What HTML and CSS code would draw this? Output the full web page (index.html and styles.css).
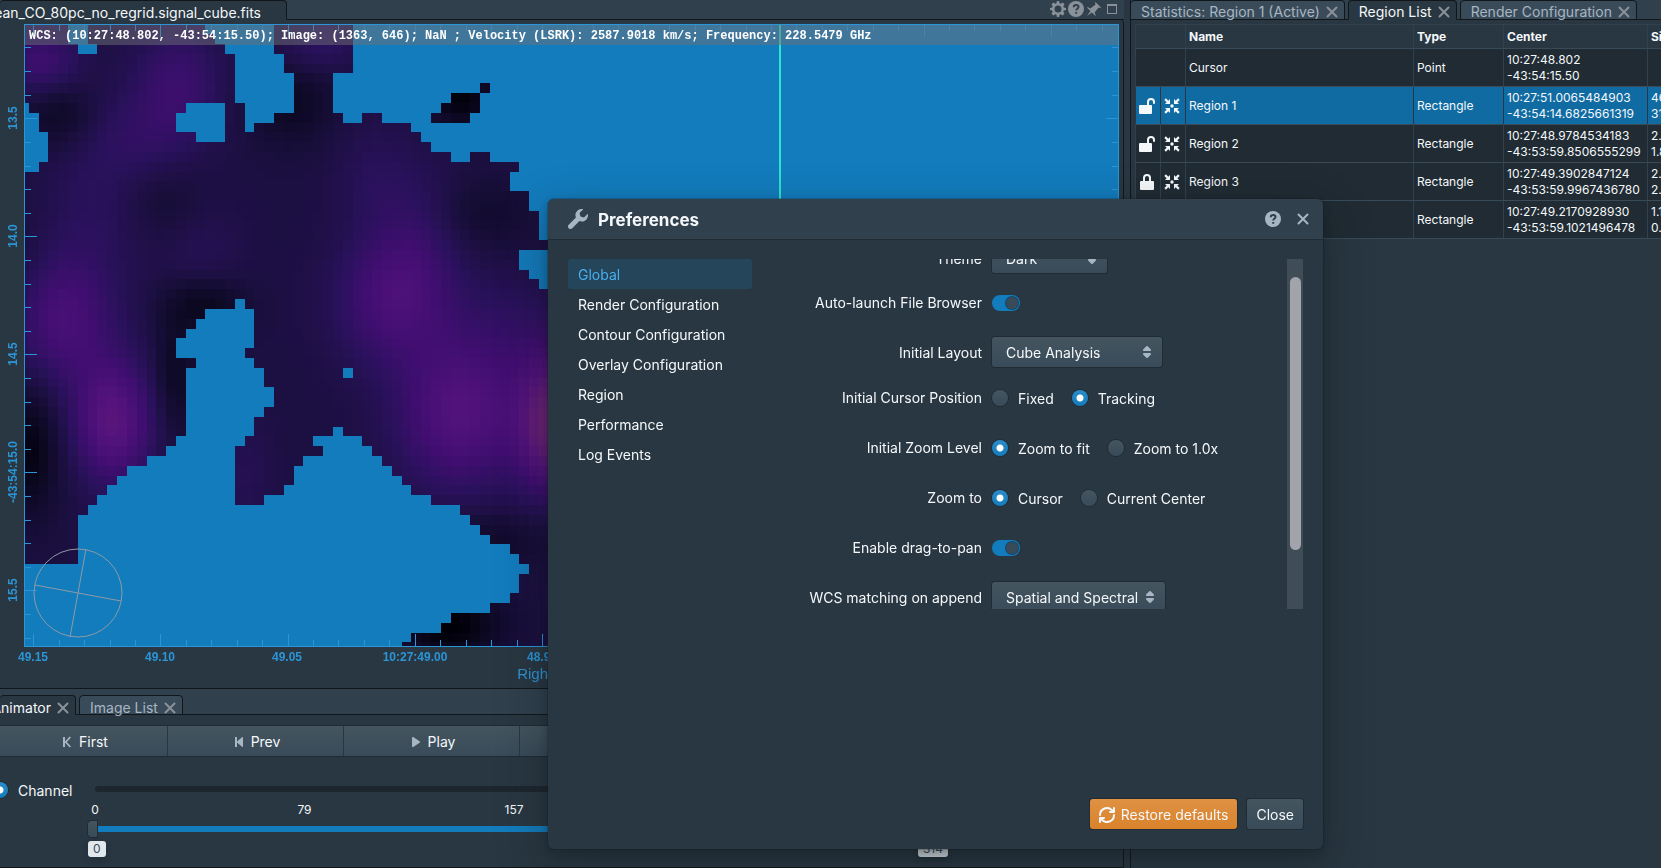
FILE: index.html
```html
<!DOCTYPE html>
<html lang="en">
<head>
<meta charset="utf-8">
<title>Image viewer</title>
<link rel="stylesheet" href="styles.css">
</head>
<body>
<svg class="sprite" aria-hidden="true">
  <symbol id="i-cross" viewBox="0 0 12 12"><path d="M1.500 1.500L10.500 10.500M10.500 1.500L1.500 10.500" fill="none" stroke="currentColor" stroke-width="2" stroke-linecap="round"/></symbol>
  <symbol id="i-cog" viewBox="0 0 16 16"><path fill-rule="evenodd" d="M6.900 0h2.200l.4 2.200 1.300.5L12.700 1.500l1.800 1.800-1.200 1.900.5 1.300 2.200.4v2.200l-2.200.4-.5 1.300 1.200 1.900-1.800 1.800-1.900-1.200-1.300.5L9.100 16H6.900l-.4-2.200-1.300-.5-1.900 1.200-1.800-1.800 1.200-1.900-.5-1.300L0 9.100V6.900l2.200-.4.5-1.300L1.500 3.300l1.800-1.800 1.900 1.200 1.300-.5zM8 4.500a3.500 3.500 0 100 7 3.500 3.500 0 000-7z"/></symbol>
  <symbol id="i-help" viewBox="0 0 16 16"><circle cx="8" cy="8" r="8"/><path class="cut" d="M5.700 6.300C5.700 4.700 6.700 4 8.100 4c1.400 0 2.400.8 2.400 2 0 1.700-2.300 1.800-2.300 3.400M8.200 11v1.800" fill="none" stroke-width="2"/></symbol>
  <symbol id="i-pin" viewBox="0 0 16 16"><path d="M9.410.920c-.51.51-.41 1.500.15 2.560L4.340 7.540C2.800 6.480 1.450 6.050.920 6.580l3.540 3.540-3.540 4.950 4.950-3.540 3.540 3.540c.53-.53.1-1.880-.96-3.420l4.060-5.220c1.060.56 2.040.66 2.550.15z"/></symbol>
  <symbol id="i-max" viewBox="0 0 16 16"><path fill-rule="evenodd" d="M3 3h10v10H3zM4 5v7h8V5z"/></symbol>
  <symbol id="i-wrench" viewBox="0 0 16 16"><path d="M15.830 3.700l-3.060 3.050-2.840-.7-.7-2.830L12.290.170a5 5 0 00-4.830 1.290 4.970 4.970 0 00-1.120 5.360L.580 12.580A2 2 0 002 16c.55 0 1.050-.22 1.410-.59l5.770-5.770c1.790.69 3.910.35 5.350-1.120 1.320-1.300 1.740-3.150 1.300-4.820z"/></symbol>
  <symbol id="i-unlock" viewBox="0 0 16 16"><path d="M12 0a4 4 0 00-4 4v3H1a1 1 0 00-1 1v7a1 1 0 001 1h11a1 1 0 001-1V8a1 1 0 00-1-1h-2V4a2 2 0 014 0v1a1 1 0 002 0V4a4 4 0 00-4-4z"/></symbol>
  <symbol id="i-lock" viewBox="0 0 16 16"><path fill-rule="evenodd" d="M14 7h-2V4a4 4 0 00-8 0v3H2a1 1 0 00-1 1v7a1 1 0 001 1h12a1 1 0 001-1V8a1 1 0 00-1-1zM6 7V4a2 2 0 014 0v3z"/></symbol>
  <symbol id="i-center" viewBox="0 0 16 16"><circle cx="8" cy="8" r="1.700"/><path d="M6 1v5H1l1.700-1.700L.300 1.900 1.900.300l2.400 2.400zM10 1v5h5l-1.700-1.700 2.400-2.400L14.100.300l-2.400 2.400zM6 15v-5H1l1.700 1.700-2.400 2.400 1.600 1.600 2.400-2.400zM10 15v-5h5l-1.700 1.700 2.400 2.400-1.600 1.600-2.400-2.400z"/></symbol>
  <symbol id="i-carets" viewBox="0 0 16 16"><path d="M5 7h6a1 1 0 00.71-1.710l-3-3a1 1 0 00-1.420 0l-3 3A1 1 0 005 7zm6 2H5a1 1 0 00-.71 1.710l3 3a1 1 0 001.420 0l3-3A1 1 0 0011 9z"/></symbol>
  <symbol id="i-refresh" viewBox="0 0 16 16"><path d="M15 7a1 1 0 00-1 1 6 6 0 01-10.460 4H5a1 1 0 000-2H1a1 1 0 00-1 1v4a1 1 0 002 0v-1.740A8 8 0 0016 8a1 1 0 00-1-1zm0-7a1 1 0 00-1 1v1.740A8 8 0 000 8a1 1 0 002 0 6 6 0 0110.460-4H11a1 1 0 000 2h4a1 1 0 001-1V1a1 1 0 00-1-1z"/></symbol>
  <symbol id="i-first" viewBox="0 0 16 16"><path d="M4 3h2v10H4zM12 3.600L7.800 8l4.200 4.400-1.300 1.200L5.500 8l5.200-5.600z"/></symbol>
  <symbol id="i-prev" viewBox="0 0 16 16"><path d="M4 3h2v4.500L11 3.200c.5-.4 1-.2 1 .5v8.600c0 .7-.5.9-1 .5L6 8.500V13H4z"/></symbol>
  <symbol id="i-play" viewBox="0 0 16 16"><path d="M4 3.800c0-.8.600-1 1.200-.7l6.400 4.200c.5.300.5 1 0 1.400l-6.400 4.200c-.6.300-1.200.1-1.200-.7z"/></symbol>
</svg>

<main class="workspace">
  <div class="left">
    <section class="stack viewer-stack">
      <header class="bar">
        <button class="tab active file-tab">clean_CO_80pc_no_regrid.signal_cube.fits</button>
        <div class="tools">
          <button aria-label="Settings"><svg><use href="#i-cog"/></svg></button>
          <button aria-label="Help"><svg><use href="#i-help"/></svg></button>
          <button aria-label="Pin"><svg><use href="#i-pin"/></svg></button>
          <button aria-label="Maximise"><svg><use href="#i-max"/></svg></button>
        </div>
      </header>
      <div class="viewer">
        <div class="plot">
          <canvas id="raster"></canvas>
          <div class="readout">WCS: (10:27:48.802, -43:54:15.50); Image: (1363, 646); NaN ; Velocity (LSRK): 2587.9018 km/s; Frequency: 228.5479 GHz</div>
        </div>
        <svg class="axes">
          <g class="beam">
            <circle cx="78" cy="573" r="44"/>
            <path d="M86 529L70 617M35 565L121 581"/>
          </g>
          <g class="ticklabels">
            <text x="33" y="641">49.15</text>
            <text x="160" y="641">49.10</text>
            <text x="287" y="641">49.05</text>
            <text x="415" y="641">10:27:49.00</text>
            <text x="542" y="641">48.95</text>
            <text transform="translate(17 98) rotate(-90)">13.5</text>
            <text transform="translate(17 216) rotate(-90)">14.0</text>
            <text transform="translate(17 334) rotate(-90)">14.5</text>
            <text transform="translate(17 452) rotate(-90)">-43:54:15.0</text>
            <text transform="translate(17 570) rotate(-90)">15.5</text>
          </g>
          <text class="title" x="571" y="659">Right Ascension</text>
          <text class="title" transform="translate(0 316) rotate(-90)">Declination</text>
        </svg>
      </div>
    </section>

    <section class="stack animator-stack">
      <header class="bar low">
        <button class="tab active anim-tab">Animator <svg><use href="#i-cross"/></svg></button>
        <button class="tab">Image List <svg><use href="#i-cross"/></svg></button>
      </header>
      <div class="animator">
        <div class="playback">
          <button><svg><use href="#i-first"/></svg>First</button>
          <button><svg><use href="#i-prev"/></svg>Prev</button>
          <button><svg><use href="#i-play"/></svg>Play</button>
          <button>Next</button>
          <button>Last</button>
        </div>
        <div class="channel">
          <label class="radio channel-radio"><input type="radio" name="axis" checked><span>Channel</span></label>
          <div class="sliders">
            <input class="track-slider" type="range" min="0" max="314" value="230" aria-label="Channel">
            <div class="scale"><span>0</span><span>79</span><span>157</span><span>236</span><span>314</span></div>
            <input class="range-slider" type="range" min="0" max="314" value="0" aria-label="Channel range">
            <div class="ends"><output>0</output><output>314</output></div>
          </div>
        </div>
      </div>
    </section>
  </div>

  <section class="stack right">
    <header class="bar">
      <button class="tab">Statistics: Region 1 (Active) <svg><use href="#i-cross"/></svg></button>
      <button class="tab active">Region List <svg><use href="#i-cross"/></svg></button>
      <button class="tab">Render Configuration <svg><use href="#i-cross"/></svg></button>
    </header>
    <div class="regions">
      <table>
        <colgroup><col class="c-icon"><col class="c-icon"><col class="c-name"><col class="c-type"><col class="c-center"><col class="c-size"></colgroup>
        <thead><tr><th colspan="2"></th><th>Name</th><th>Type</th><th>Center</th><th>Size</th></tr></thead>
        <tbody>
          <tr><td colspan="2"></td><td>Cursor</td><td>Point</td><td>10:27:48.802<br>-43:54:15.50</td><td></td></tr>
          <tr class="selected"><td><svg><use href="#i-unlock"/></svg></td><td><svg><use href="#i-center"/></svg></td><td>Region 1</td><td>Rectangle</td><td>10:27:51.0065484903<br>-43:54:14.6825661319</td><td>46<br>31</td></tr>
          <tr><td><svg><use href="#i-unlock"/></svg></td><td><svg><use href="#i-center"/></svg></td><td>Region 2</td><td>Rectangle</td><td>10:27:48.9784534183<br>-43:53:59.8506555299</td><td>2.<br>1.8</td></tr>
          <tr><td><svg><use href="#i-lock"/></svg></td><td><svg><use href="#i-center"/></svg></td><td>Region 3</td><td>Rectangle</td><td>10:27:49.3902847124<br>-43:53:59.9967436780</td><td>2.<br>2.</td></tr>
          <tr><td><svg><use href="#i-lock"/></svg></td><td><svg><use href="#i-center"/></svg></td><td>Region 4</td><td>Rectangle</td><td>10:27:49.2170928930<br>-43:53:59.1021496478</td><td>1.1<br>0.</td></tr>
        </tbody>
      </table>
    </div>
  </section>
</main>

<div class="dialog" role="dialog" aria-labelledby="dlg-title">
  <header class="dialog-head">
    <svg class="wrench"><use href="#i-wrench"/></svg>
    <h1 id="dlg-title">Preferences</h1>
    <button class="help" aria-label="Help"><svg><use href="#i-help"/></svg></button>
    <button class="close-x" aria-label="Close"><svg><use href="#i-cross"/></svg></button>
  </header>
  <div class="dialog-body">
    <nav>
      <a href="#global" class="current">Global</a>
      <a href="#render">Render Configuration</a>
      <a href="#contour">Contour Configuration</a>
      <a href="#overlay">Overlay Configuration</a>
      <a href="#region">Region</a>
      <a href="#performance">Performance</a>
      <a href="#log">Log Events</a>
    </nav>
    <div class="panel">
      <form class="fields">
        <div class="row tall">
          <label for="theme">Theme</label>
          <div class="select w-theme"><select id="theme"><option>Dark</option></select><svg><use href="#i-carets"/></svg></div>
        </div>
        <div class="row switch-row">
          <label for="launch">Auto-launch File Browser</label>
          <input class="switch" id="launch" type="checkbox" checked>
        </div>
        <div class="row tall">
          <label for="layout">Initial Layout</label>
          <div class="select w-layout"><select id="layout"><option>Cube Analysis</option></select><svg><use href="#i-carets"/></svg></div>
        </div>
        <div class="row">
          <span>Initial Cursor Position</span>
          <div class="radios">
            <label class="radio"><input type="radio" name="pos"><span>Fixed</span></label>
            <label class="radio"><input type="radio" name="pos" checked><span>Tracking</span></label>
          </div>
        </div>
        <div class="row">
          <span>Initial Zoom Level</span>
          <div class="radios">
            <label class="radio"><input type="radio" name="zoom" checked><span>Zoom to fit</span></label>
            <label class="radio"><input type="radio" name="zoom"><span>Zoom to 1.0x</span></label>
          </div>
        </div>
        <div class="row">
          <span>Zoom to</span>
          <div class="radios">
            <label class="radio"><input type="radio" name="point" checked><span>Cursor</span></label>
            <label class="radio"><input type="radio" name="point"><span>Current Center</span></label>
          </div>
        </div>
        <div class="row switch-row">
          <label for="pan">Enable drag-to-pan</label>
          <input class="switch" id="pan" type="checkbox" checked>
        </div>
        <div class="row tall">
          <label for="wcs">WCS matching on append</label>
          <div class="select w-wcs"><select id="wcs"><option>Spatial and Spectral</option></select><svg><use href="#i-carets"/></svg></div>
        </div>
      </form>
      <div class="scrollbar"><div class="thumb"></div></div>
    </div>
  </div>
  <footer class="dialog-foot">
    <button class="btn warning"><svg><use href="#i-refresh"/></svg>Restore defaults</button>
    <button class="btn">Close</button>
  </footer>
</div>
<script src="raster.js"></script>
</body>
</html>
```
FILE: styles.css
```css
* { box-sizing: border-box; }
body {
  margin: 0;
  height: 100vh;
  overflow: hidden;
  position: relative;
  background: #293742;
  color: #f5f8fa;
  font: 14px/18px Inter, "Liberation Sans", sans-serif;
}
button, select, input { font: inherit; color: inherit; margin: 0; }
button { border: 0; padding: 0; background: none; }
svg { fill: currentColor; display: block; flex: none; width: 16px; height: 16px; }
.sprite { position: absolute; width: 0; height: 0; }
.cut { stroke: #30404d; }

.workspace { display: grid; grid-template-columns: minmax(0, 1124fr) minmax(0, 531fr); gap: 6px; height: 100%; background: #293742; }
.left { display: flex; flex-direction: column; min-width: 0; }
.stack { display: flex; flex-direction: column; min-width: 0; min-height: 0; }
.viewer-stack { flex: 690; }
.animator-stack { flex: 178; border: solid #10161a; border-width: 0 1px 1px 0; }

.bar { display: flex; height: 20px; flex: none; align-items: flex-end; gap: 3px; background: #30404d; box-shadow: inset 0 -1px #10161a; }
.bar.low { height: 26px; }
.tab {
  display: flex; align-items: center; gap: 6px; height: 20px; padding: 3px 6px 0 10px;
  color: #a7b6c2; background: #394b59; white-space: nowrap; font-size: 14px;
  border: 1px solid #10161a; border-radius: 4px 4px 0 0;
}
.low .tab { padding-top: 5px; }
.tab.active { background: #293742; color: #f5f8fa; border-bottom-color: #293742; }
.tab svg { width: 12px; height: 12px; color: #8a9199; }
.tab.file-tab { width: 287px; padding: 5px 25px 0 0; justify-content: flex-end; border-left: 0; }
.tab.anim-tab { width: 76px; justify-content: flex-end; border-left: 0; }
.tools { display: flex; gap: 2px; margin: 0 4px 3px auto; color: #8a9199; }

.viewer { flex: 1; position: relative; padding: 4px 4px 41px 24px; border: solid #10161a; border-width: 0 1px 1px 0; border-top-right-radius: 4px; display: flex; overflow: hidden; }
.plot { flex: 1; position: relative; border: 1px solid #2b95d6; background: #137cbd; min-width: 0; }
#raster { position: absolute; inset: 0; width: 100%; height: 100%; }
.readout { position: relative; height: 20px; padding-left: 4px; overflow: hidden; background: rgba(110, 112, 120, .5); font: bold 12px/22px "Liberation Mono", monospace; color: #fff; white-space: pre; }
.axes { position: absolute; inset: 0; width: 100%; height: 100%; font-family: "Liberation Sans", sans-serif; fill: #2b95d6; text-anchor: middle; }
.ticklabels { font-size: 12px; font-weight: bold; }
.title { font-size: 15px; }
.beam { fill: none; stroke: #8f9aa5; }

.animator { flex: 1; padding-top: 10px; display: flex; flex-direction: column; }
.playback { display: flex; height: 32px; border: solid #202b33; border-width: 1px 0; }
.playback button { flex: none; width: 176px; display: flex; align-items: center; justify-content: center; gap: 4px; padding-top: 1px; background: linear-gradient(#44555f, #394b59); border-right: 1px solid #293742; }
.playback button:first-child { width: 168px; }
.playback button:last-child { flex: 1; }
.playback svg { color: #a7b6c2; }
.channel { display: flex; padding: 22px 197px 0 0; }
.channel-radio { width: 88px; height: 22px; margin-left: -8px; }
.radio { display: flex; align-items: center; gap: 10px; white-space: nowrap; }
.radio span { padding-top: 2px; }
.radio input { appearance: none; width: 16px; height: 16px; border-radius: 50%; background: linear-gradient(#44555f, #394b59); box-shadow: 0 0 0 1px #202b33; }
.radio input:checked { background: radial-gradient(circle, #fff 3px, transparent 4px), linear-gradient(#2b8cc9, #137cbd); }
.sliders { flex: 1; margin-left: 8px; display: flex; flex-direction: column; }
.sliders input { appearance: none; display: block; height: 16px; width: calc(100% + 14px); background: none; }
.track-slider { margin: 3px 0 0 7px; }
.sliders .track-slider { margin: 2px 0 0 7px; }
.track-slider::-webkit-slider-runnable-track { height: 6px; border-radius: 3px; background: #1d262e; }
.track-slider::-webkit-slider-thumb { appearance: none; width: 16px; height: 16px; margin-top: -5px; background: #394b59; border-radius: 3px; }
.scale { display: flex; justify-content: space-between; font-size: 12px; line-height: 16px; padding: 5px 0 3px; margin: 0 -7px 0 7px; }
.scale span { width: 0; display: flex; justify-content: center; }
.range-slider::-webkit-slider-runnable-track { height: 16px; background: linear-gradient(#137cbd, #137cbd) 9px 5px / 100% 6px no-repeat; }
.range-slider::-webkit-slider-thumb { appearance: none; width: 9px; height: 16px; background: linear-gradient(#44555f, #394b59); border-radius: 4px 0 0 4px; box-shadow: 0 0 0 1px #202b33; }
.ends { display: flex; justify-content: space-between; margin: 4px -22px 0 0; }
.ends output { padding: 0 5px; border-radius: 3px; background: #e1e8ed; color: #394b59; font-size: 12px; line-height: 16px; box-shadow: 0 2px 6px rgba(16, 22, 26, .3); }

.right { border-left: 1px solid #10161a; }
.right .tab:first-child { border-left: 0; }
.regions { flex: 1; padding: 4px 0 0 4px; overflow: hidden; }
table { border-collapse: collapse; table-layout: fixed; width: 612px; font-size: 12px; line-height: 16px; }
.c-icon { width: 25px; } .c-name { width: 228px; } .c-type { width: 90px; } .c-center { width: 144px; } .c-size { width: 100px; }
th, td { border: 1px solid #394b59; padding: 0 3px; text-align: left; white-space: nowrap; overflow: hidden; }
th { height: 24px; font-weight: 700; background: #293742; border-color: #30404d #30404d #394b59; }
td { height: 38px; background: #202b33; border-left-color: #30404d; border-right-color: #30404d; }
.selected td { background: #106ba3; border-left-color: #293742; border-right-color: #293742; }

.dialog {
  position: absolute; left: 548px; top: 199px; width: 775px; height: 650px; background: #293742; border-radius: 6px;
  display: flex; flex-direction: column; overflow: hidden;
  box-shadow: 0 0 0 1px rgba(16, 22, 26, .2), 0 4px 8px rgba(16, 22, 26, .3), 0 18px 46px 6px rgba(16, 22, 26, .3);
}
.dialog-head { display: flex; align-items: center; height: 41px; padding: 0 14px 0 20px; background: #30404d; border-bottom: 1px solid #202b33; color: #a7b6c2; }
.wrench { width: 20px; height: 20px; }
h1 { flex: 1; margin: 0 0 0 10px; padding-top: 2px; color: #f5f8fa; font-size: 17px; line-height: 22px; font-weight: 700; }
.close-x { margin-left: 16px; width: 12px; display: flex; justify-content: center; }
.close-x svg { width: 12px; height: 12px; }
.dialog-body { flex: 1; display: flex; gap: 20px; padding: 19px 20px 0; }
nav { width: 184px; display: flex; flex-direction: column; }
nav a { padding: 7px 10px 5px; color: #f5f8fa; text-decoration: none; border-radius: 3px; }
nav .current { background: rgba(19, 124, 189, .2); color: #48aff0; }
.panel { flex: 1; display: flex; height: 350px; overflow: hidden; }
.fields { flex: 1; margin-top: -16px; }
.row { display: flex; align-items: center; height: 20px; margin-bottom: 30px; }
.row > :first-child { width: 210px; margin-right: 10px; text-align: right; white-space: nowrap; }
.row.tall { height: 30px; margin-bottom: 20px; }
.row.tall > label { padding-top: 2px; }
.row.switch-row { margin-bottom: 24px; }
.row.tall:nth-child(3) { margin-bottom: 21px; }
.radios { display: flex; gap: 18px; }
.select { position: relative; height: 30px; }
.w-theme { width: 115px; } .w-layout { width: 170px; } .w-wcs { width: 173px; }
.select select { appearance: none; width: 100%; height: 30px; padding: 2px 14px 0; border: 0; border-radius: 3px; background: linear-gradient(#44555f, #394b59); box-shadow: 0 0 0 1px #202b33; }
.select svg { position: absolute; right: 7px; top: 7px; color: #a7b6c2; pointer-events: none; }
.switch { appearance: none; width: 28px; height: 16px; border-radius: 8px; background: #137cbd; display: flex; justify-content: flex-end; align-items: center; padding: 2px; }
.switch::before { content: ""; width: 12px; height: 12px; border-radius: 50%; background: #394b59; box-shadow: 0 0 0 1px rgba(16, 22, 26, .5); }
.scrollbar { width: 16px; background: #414d56; padding: 18px 2px 0 3px; }
.thumb { height: 273px; border-radius: 6px; background: #a1a5ab; }
.dialog-foot { display: flex; justify-content: flex-end; gap: 10px; padding: 20px; }
.btn { display: flex; align-items: center; gap: 6px; height: 30px; padding: 1px 9px 0; border-radius: 3px; background: linear-gradient(#44555f, #394b59); box-shadow: 0 0 0 1px #202b33; }
.btn.warning { background: linear-gradient(#e09143, #d9822b); }
```
FILE: raster.js
```js
const canvas = document.getElementById('raster');
const W = canvas.clientWidth, H = canvas.clientHeight;
canvas.width = W;
canvas.height = H;
const ctx = canvas.getContext('2d');
const OX = 25, OY = 25, CELL = 9.81, COLS = 54, ROWS = 64;
const X = k => Math.round(19 + CELL * k) - OX;
const Y = r => Math.round(24.4 + CELL * r) - OY;

// Blank (NaN) cell spans for each raster row: [firstColumn, endColumn]
const E = 999;
const blank = [
  [[5,7],[19,26],[34,E]], [[5,7],[20,26],[34,E]], [[6,8],[21,26],[34,E]], [[22,27],[34,E]], [[22,27],[34,E]],
  [[22,28],[32,E]], [[22,28],[32,47],[48,E]], [[22,28],[32,44],[47,E]], [[0,1],[17,21],[23,28],[32,43],[47,E]],
  [[0,2],[16,21],[23,26],[33,35],[37,42],[46,E]], [[0,2],[16,21],[23,24],[40,E]], [[0,3],[18,21],[41,E]],
  [[0,3],[42,E]], [[0,3],[44,46],[48,E]], [[0,2],[51,E]], [[50,E]], [[50,E]], [[52,E]], [[52,E]], [[53,E]],
  [[53,E]], [[53,E]], [], [[51,E]], [[51,E]], [[52,E]], [[53,E]], [], [[22,23]], [[19,24]], [[18,24]], [[17,24]],
  [[16,24]], [[16,23]], [[18,24]], [[17,25],[33,34]], [[17,25]], [[17,26]], [[17,26]], [[17,25]], [[17,24]],
  [[17,24],[32,33]], [[16,23],[30,35]], [[15,22],[31,36]], [[13,22],[29,37]], [[11,22],[28,38]], [[10,22],[28,39]],
  [[9,22],[27,40]], [[8,22],[25,42]], [[7,45]], [[6,46]], [[6,47]], [[6,48]], [[6,50]], [[6,51]], [[0,52]],
  [[0,51]], [[0,51]], [[0,50]], [[0,48]], [[0,44]], [[0,43]], [[0,40]], [[0,39]]
];

// Emission: [x, y, sigmaX, sigmaY, amplitude]
const blobs = [
  [42,62,26,24,.09], [178,82,32,40,.08], [140,135,40,30,.04], [320,45,26,18,.05], [95,205,36,60,.04],
  [62,320,36,46,.11], [113,422,28,44,.16], [418,240,34,60,.05], [390,300,40,46,.1], [370,175,26,36,.03],
  [200,250,32,36,.03], [460,415,44,52,.14], [556,425,26,48,.23], [520,330,50,40,.04], [245,475,20,40,.03],
  [60,115,26,24,-.06], [290,105,30,26,-.06], [165,205,28,26,-.03], [480,215,34,26,-.04], [460,95,24,24,-.1],
  [28,450,22,46,-.09], [205,305,28,20,-.07], [175,375,14,40,-.06], [448,625,36,24,-.11], [470,540,60,20,-.05],
  [20,260,20,40,-.02]
];
const ramp = [
  [0,[0,0,8]], [.05,[13,9,36]], [.1,[26,15,62]], [.15,[42,17,92]], [.2,[64,14,113]], [.25,[82,18,124]],
  [.32,[104,32,120]], [.42,[130,44,108]]
];
function colour(v) {
  v = Math.max(0, Math.min(.419, v));
  let i = 0;
  while (v > ramp[i + 1][0]) i++;
  const [a, ca] = ramp[i], [b, cb] = ramp[i + 1], t = (v - a) / (b - a);
  return `rgb(${ca.map((c, j) => Math.round(c + (cb[j] - c) * t)).join(',')})`;
}

ctx.fillStyle = '#137cbd';
ctx.fillRect(0, 0, W, H);
for (let r = 0; r < ROWS; r++) {
  for (let k = 0; k < COLS; k++) {
    if (blank[r].some(([a, b]) => k >= a && k < b)) continue;
    const cx = 19 + CELL * (k + .5), cy = 24.4 + CELL * (r + .5);
    let v = .105;
    for (const [bx, by, sx, sy, amp] of blobs) {
      v += amp * Math.exp(-((cx - bx) ** 2) / (2 * sx * sx) - ((cy - by) ** 2) / (2 * sy * sy));
    }
    ctx.fillStyle = colour(v);
    ctx.fillRect(X(k), Y(r), X(k + 1) - X(k), Y(r + 1) - Y(r));
  }
}

// Profile cursor
ctx.fillStyle = '#2ee2cc';
ctx.fillRect(779 - OX, 0, 2, H);

// Axis ticks on all four sides
ctx.fillStyle = '#2b95d6';
for (let i = -3; ; i++) {
  const y = Math.round(118.3 + 23.6 * i) - OY;
  if (y > H) break;
  const n = i % 5 === 0 ? 12 : 6;
  ctx.fillRect(0, y, n, 1);
  ctx.fillRect(W - n, y, n, 1);
}
for (let i = 0; ; i++) {
  const x = Math.round(33.2 + 25.44 * i) - OX;
  if (x > W) break;
  const n = i % 5 === 0 ? 12 : 6;
  ctx.fillRect(x, 0, 1, n);
  ctx.fillRect(x, H - n, 1, n);
}
```
